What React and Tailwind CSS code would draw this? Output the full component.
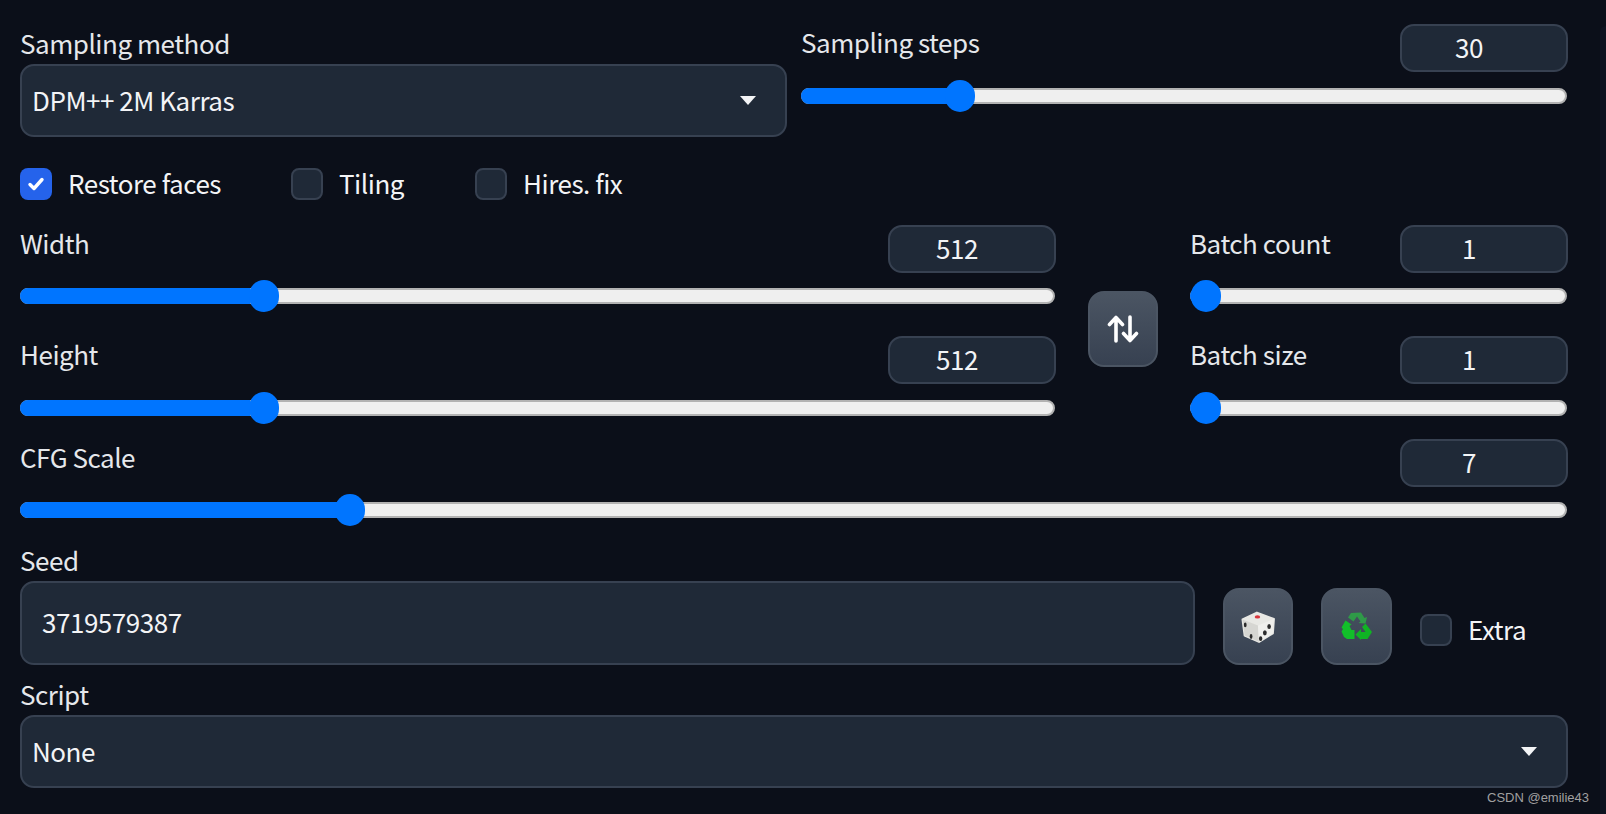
import React from 'react';

const font = 'font-["Noto_Sans_CJK_SC","Source_Sans_Pro",sans-serif]';

function Label({ children, className = '' }) {
    return <div className={`text-[26px] tracking-[-0.47px] leading-[36px] text-[#e5e7eb] ${className}`}>{children}</div>;
}

function NumberBox({ value }) {
    return (
        <div className="w-[168px] h-[48px] rounded-[14px] border-2 border-[#374151] bg-[#1f2937] flex items-center justify-center pr-[30px] pb-[3px] text-[26px] tracking-[-0.47px] text-[#f3f4f6]">
            {value}
        </div>
    );
}

function Slider({ thumb, className = '' }) {
    return (
        <div className={`relative h-[32px] mr-[1px] flex items-center ${className}`}>
            <div className="w-full h-[16px] rounded-full bg-[#efefef] border-2 border-[#b2b2b2]" />
            <div className={`absolute left-0 h-[16px] rounded-l-full bg-[#0075ff] ${thumb.fill}`} />
            <div className={`absolute top-0 w-[30px] h-[32px] rounded-full bg-[#0075ff] ${thumb.pos}`} />
        </div>
    );
}

function SliderField({ label, value, thumb, gap = 'mt-[7px]', className = '' }) {
    return (
        <div className={className}>
            <div className="flex justify-between h-[48px]">
                <Label>{label}</Label>
                <NumberBox value={value} />
            </div>
            <Slider thumb={thumb} className={gap} />
        </div>
    );
}

function Checkbox({ checked }) {
    if (checked) {
        return (
            <div className="w-[32px] h-[32px] rounded-[8px] bg-[#2563eb] flex items-center justify-center">
                <svg width="20" height="20" viewBox="0 0 20 20" fill="none" stroke="white" strokeWidth="3.4" strokeLinecap="round" strokeLinejoin="round">
                    <path d="M4 10.5l4 4 8-9" />
                </svg>
            </div>
        );
    }
    return <div className="w-[32px] h-[32px] rounded-[8px] bg-[#1f2937] border-2 border-[#374151]" />;
}

function Check({ label, checked, className = '' }) {
    return (
        <div className={`flex items-center gap-[16px] ${className}`}>
            <Checkbox checked={checked} />
            <span className="text-[26px] tracking-[-0.47px] leading-[30px] pb-[2px] text-[#f3f4f6]">{label}</span>
        </div>
    );
}

function Caret() {
    return (
        <svg width="16" height="9" viewBox="0 0 16 9" fill="#f3f4f6">
            <path d="M0 0h16L8 9z" />
        </svg>
    );
}

function Select({ value, className = '' }) {
    return (
        <div className={`h-[73px] rounded-[14px] border-2 border-[#374151] bg-[#1f2937] flex items-center justify-between pl-[10px] pr-[29px] text-[26px] tracking-[-0.47px] text-[#f3f4f6] ${className}`}>
            <span className="pb-[3px]">{value}</span>
            <Caret />
        </div>
    );
}

function ToolButton({ children, className = '' }) {
    return (
        <div className={`rounded-[16px] border-2 border-[#4b5563] bg-gradient-to-b from-[#4b5563] to-[#374151] flex items-center justify-center ${className}`}>
            {children}
        </div>
    );
}

function SwapIcon() {
    return (
        <svg width="32" height="30" viewBox="0 0 32 30" fill="none" stroke="white" strokeWidth="3.6" strokeLinecap="round" strokeLinejoin="round">
            <path d="M9 27V4M2.5 10.5L9 3.5l6.5 7" />
            <path d="M23 3v23M16.500 19.500l6.500 7 6.500-7" />
        </svg>
    );
}

function DiceIcon() {
    return (
        <svg width="35" height="32" viewBox="-1 -1 33 30">
            <path d="M14 0.500L30 6.500 29 20 16 28 2.500 22 0.500 7z" fill="#e8e8e4" stroke="#e8e8e4" strokeWidth="2" strokeLinejoin="round" />
            <path d="M0.500 7L15 12.500 16 28 2.500 22z" fill="#d6d6d2" />
            <path d="M15 12.500L30 6.500 29 20 16 28z" fill="#efefec" />
            <ellipse cx="14.500" cy="4.500" rx="2.600" ry="1.500" fill="#d8343c" />
            <ellipse cx="3" cy="12" rx="1.300" ry="2.300" fill="#2b2b2b" />
            <ellipse cx="8.500" cy="23" rx="1.300" ry="2.300" fill="#2b2b2b" />
            <ellipse cx="25.500" cy="13.500" rx="1.700" ry="2.400" fill="#2b2b2b" />
            <ellipse cx="21.500" cy="19.500" rx="1.800" ry="2.400" fill="#2b2b2b" />
            <ellipse cx="17.500" cy="25" rx="1.600" ry="2.200" fill="#2b2b2b" />
        </svg>
    );
}

function RecycleIcon() {
    return (
        <svg width="31" height="28" viewBox="0 0 31 28" strokeLinejoin="round" className="mb-[2px]">
            <path d="M10 1L20 0.500 23.500 6 26 5 24.500 11.500 17.500 11 19.500 9.500 16 4.500 12.500 9.500 7 5.500z" fill="#2f9a48" />
            <path d="M4.500 8.500L10.500 12.500 8.500 14 10.500 18H13.500V27H6L3 25 0.500 19.500 2 17 0.500 15.500z" fill="#12bf2a" />
            <path d="M24.500 11.500L31 20 26.500 27H20V28L14.500 22.500 20 17V20H24.500L21 15z" fill="#10b424" />
        </svg>
    );
}

export default function App() {
    return (
        <div className={`relative w-[1606px] h-[814px] overflow-hidden bg-[#0b0f19] pl-[20px] pr-[38px] pt-[24px] ${font}`}>
            {/* next panel peeking in on the right */}
            <div className="absolute right-0 top-[26px] bottom-0 w-[6px] rounded-tl-[12px] bg-[#0e1320]" />

            <div className="flex gap-[14px]">
                <div className="w-[767px]">
                    <Label className="mt-[1px]">Sampling method</Label>
                    <Select value="DPM++ 2M Karras" className="mt-[3px]" />
                </div>
                <SliderField
                    label="Sampling steps"
                    value="30"
                    thumb={{ fill: 'w-[150px]', pos: 'left-[144px]' }}
                    gap="mt-[8px]"
                    className="flex-1"
                />
            </div>

            <div className="flex mt-[31px]">
                <Check label="Restore faces" checked className="w-[271px]" />
                <Check label="Tiling" className="w-[184px]" />
                <Check label="Hires. fix" />
            </div>

            <div className="flex mt-[25px]">
                <div className="w-[1036px]">
                    <SliderField label="Width" value="512" thumb={{ fill: 'w-[230px]', pos: 'left-[229px]' }} />
                    <SliderField label="Height" value="512" thumb={{ fill: 'w-[230px]', pos: 'left-[229px]' }} gap="mt-[8px]" className="mt-[24px]" />
                </div>
                <ToolButton className="w-[70px] h-[76px] ml-[32px] mr-[32px] mt-[66px]">
                    <SwapIcon />
                </ToolButton>
                <div className="flex-1">
                    <SliderField label="Batch count" value="1" thumb={{ fill: 'w-[15px]', pos: 'left-[1px]' }} />
                    <SliderField label="Batch size" value="1" thumb={{ fill: 'w-[15px]', pos: 'left-[1px]' }} gap="mt-[8px]" className="mt-[24px]" />
                </div>
            </div>

            <SliderField label="CFG Scale" value="7" thumb={{ fill: 'w-[320px]', pos: 'left-[315px]' }} className="mt-[15px]" />

            <Label className="mt-[16px]">Seed</Label>
            <div className="flex items-end mt-[3px]">
                <div className="w-[1175px] h-[84px] rounded-[14px] border-2 border-[#374151] bg-[#1f2937] flex items-center pl-[20px] pb-[3px] text-[26px] tracking-[-0.47px] text-[#f3f4f6]">
                    3719579387
                </div>
                <ToolButton className="w-[70px] h-[77px] ml-[28px]">
                    <DiceIcon />
                </ToolButton>
                <ToolButton className="w-[71px] h-[77px] ml-[28px]">
                    <RecycleIcon />
                </ToolButton>
                <Check label="Extra" className="ml-[28px] mb-[19px]" />
            </div>

            <Label className="mt-[11px]">Script</Label>
            <Select value="None" className="mt-[3px]" />

            <div className="absolute left-[1487px] top-[790px] font-['Liberation_Sans',sans-serif] text-[13px] leading-[16px] text-[#a0a0a0]">
                CSDN @emilie43
            </div>
        </div>
    );
}
